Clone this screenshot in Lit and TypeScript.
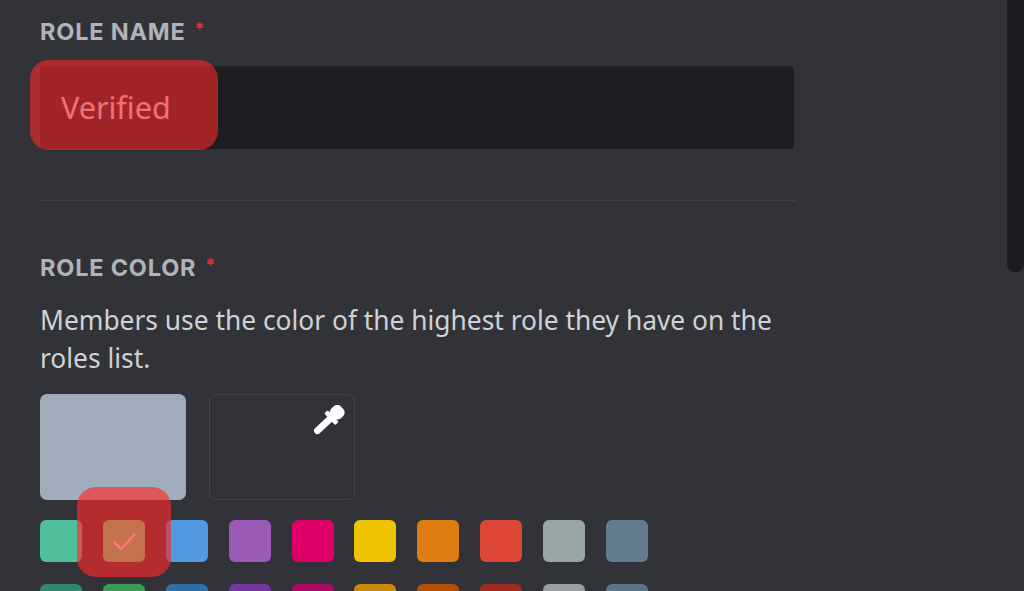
import { LitElement, html, css, svg } from "lit";
import { customElement } from "lit/decorators.js";

const row1 = ["#50bf9b", "#5cf08e", "#4f9ae0", "#9b59b8", "#dd0066", "#eec400", "#e07d12", "#dd4535", "#98a6a6", "#627d8e"];
const row2 = ["#32866f", "#3a9b5a", "#2f6fa3", "#7436a0", "#ad0a68", "#c98a0a", "#b44f06", "#9e2a20", "#9a9ea2", "#5c7585"];

const dropper = svg`<svg class="dropper" viewBox="0 0 34 32" width="34" height="32" aria-hidden="true">
  <g transform="translate(2 28) rotate(-43)">
    <rect x="0" y="-3.4" width="24" height="6.8" rx="3.2" fill="#fff"/>
    <rect x="20" y="-8" width="5" height="16" rx="1.5" fill="#fff"/>
    <rect x="24" y="-6.8" width="13" height="13.6" rx="5" fill="#fff"/>
  </g>
</svg>`;

@customElement("app-root")
export class AppRoot extends LitElement {
  static styles = css`
    :host {
      display: block;
      width: 1024px;
      height: 591px;
      overflow: hidden;
      position: relative;
      background: #323338;
      font-family: "Noto Sans", "Open Sans", sans-serif;
    }
    .page { display: flex; height: 591px; }
    .content {
      flex: none;
      width: 756px;
      padding: 18px 0 0 40px;
      box-sizing: content-box;
    }
    .label {
      font-family: Inter, "Noto Sans", sans-serif;
      font-size: 23.5px;
      letter-spacing: 0.8px;
      line-height: 28px;
      font-weight: 700;
      color: #b0b3ba;
      display: flex;
      height: 28px;
      white-space: nowrap;
    }
    .star { color: #d2353f; font-size: 18px; margin-left: 9px; line-height: 22px; font-weight: 700; }
    .input {
      margin-top: 20px;
      height: 83px;
      width: 754px;
      background: #1d1e22;
      border-radius: 4px;
      display: flex;
      align-items: center;
      padding-left: 21px;
      box-sizing: border-box;
      font-size: 30.5px;
      color: #dbdee1;
      padding-bottom: 2px;
    }
    .divider { height: 1px; background: #3e4046; margin: 51px 0 53px; width: 756px; }
    .desc {
      margin-top: 19px;
      width: 750px;
      font-size: 26.35px;
      line-height: 38px;
      color: #cfd2d6;
    }
    .previews { display: flex; gap: 23px; margin-top: 17px; }
    .preview { width: 146px; height: 106px; border-radius: 7px; box-sizing: border-box; }
    .preview.filled { background: #9fadba; }
    .preview.custom {
      border: 1.5px solid #43454c;
      display: flex;
      justify-content: flex-end;
      padding: 10px 7px 0 0;
    }
    .dropper { display: block; }
    .swatches { display: flex; gap: 20.9px; margin-top: 20px; }
    .swatches + .swatches { margin-top: 22px; }
    .swatch {
      flex: none;
      width: 42px;
      height: 42px;
      border-radius: 6px;
      display: flex;
      align-items: center;
      justify-content: center;
    }
    .swatch svg { display: block; }
    .scrollbar {
      position: absolute;
      top: -10px;
      right: 0;
      width: 17px;
      height: 282px;
      background: #1c1d20;
      border-radius: 8px;
    }
    .mark {
      position: absolute;
      border-radius: 19px;
    }
    .mark.name { left: 30px; top: 60px; width: 188px; height: 90px; background: rgba(250, 41, 41, 0.6); }
    .mark.color { left: 77px; top: 487px; width: 94px; height: 90px; background: rgba(255, 41, 41, 0.64); }
  `;

  render() {
    return html`
      <div class="page">
        <div class="content">
          <div class="label">ROLE NAME<span class="star">*</span></div>
          <div class="input">Verified</div>
          <div class="divider"></div>
          <div class="label">ROLE COLOR<span class="star">*</span></div>
          <div class="desc">Members use the color of the highest role they have on the roles list.</div>
          <div class="previews">
            <div class="preview filled"></div>
            <div class="preview custom">${dropper}</div>
          </div>
          <div class="swatches">
            ${row1.map(
              (c, i) => html`<div class="swatch" style="background:${c}">
                ${i === 1
                  ? svg`<svg viewBox="0 0 26 22" width="26" height="22" aria-hidden="true"><path d="M3 12 L10 19 L24 4" stroke="#fff" stroke-width="2.6" fill="none"/></svg>`
                  : ""}
              </div>`
            )}
          </div>
          <div class="swatches">
            ${row2.map((c) => html`<div class="swatch" style="background:${c}"></div>`)}
          </div>
        </div>
      </div>
      <div class="scrollbar"></div>
      <div class="mark name"></div>
      <div class="mark color"></div>
    `;
  }
}
